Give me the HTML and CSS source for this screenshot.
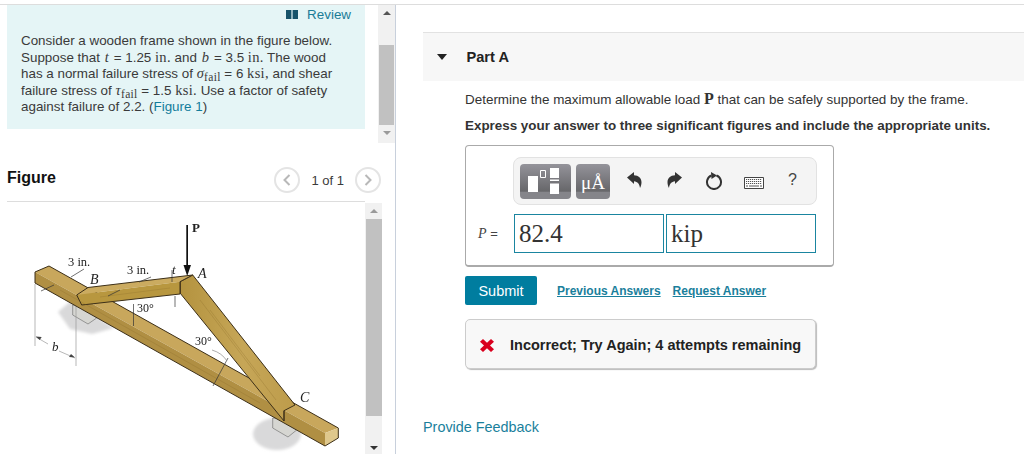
FILE: index.html
```html
<!DOCTYPE html>
<html lang="en">
<head>
<meta charset="utf-8">
<title>Part A</title>
<link rel="stylesheet" href="styles.css">
</head>
<body>
<div class="app">
  <section class="left">
    <div class="intro-row">
      <div class="intro">
        <div class="review-row">
          <svg class="book" viewBox="0 0 12 9"><path d="M0 0h5.400v9H0zM6.600 0H12v9H6.600z"/></svg>
          <a class="review">Review</a>
        </div>
        <p class="problem">Consider a wooden frame shown in the figure below.<br>Suppose that <i class="m var">t</i> = 1.25 <span class="m">in.</span> and <i class="m var">b</i> = 3.5 <span class="m">in.</span> The wood<br>has a normal failure stress of <i class="m">σ</i><sub class="m">fail</sub> = 6 <span class="m">ksi,</span> and shear<br>failure stress of <i class="m">τ</i><sub class="m">fail</sub> = 1.5 <span class="m">ksi.</span> Use a factor of safety<br>against failure of 2.2. (<a class="link">Figure 1</a>)</p>
      </div>
      <div class="scroll scroll-top">
        <span class="up"></span>
        <span class="thumb"></span>
        <span class="down"></span>
      </div>
    </div>
    <div class="fig-head">
      <h2 class="fig-title">Figure</h2>
      <div class="pager">
        <span class="circle"><svg viewBox="0 0 8 12"><path d="M6.500 1 1.500 6l5 5"/></svg></span>
        <span class="count">1 of 1</span>
        <span class="circle"><svg viewBox="0 0 8 12"><path d="M1.500 1l5 5-5 5"/></svg></span>
      </div>
    </div>
    <div class="fig-rule"></div>
    <div class="fig-row">
      <svg class="frame" viewBox="7 203 358 251">
        <defs>
          <filter id="soft"><feGaussianBlur stdDeviation="1.500"/></filter>
          <linearGradient id="strut" x1="0" y1="0" x2="1" y2="0">
            <stop offset="0" stop-color="#b4933f"/><stop offset=".55" stop-color="#c6a657"/><stop offset="1" stop-color="#bd9c4b"/>
          </linearGradient>
        </defs>
        <g filter="url(#soft)" fill="#d9d9da">
          <path d="M58 312 72 300 114 328 92 334 70 329z"/>
          <ellipse cx="277" cy="434" rx="24" ry="16"/>
        </g>
        <path d="M72.700 305v10l15.300 9 8.700-6-10-13z" fill="#d6d6d2" stroke="#666" stroke-width=".6"/>
        <path d="M272.700 418v10l15.300 9 8.700-7-10-12z" fill="#d6d6d2" stroke="#666" stroke-width=".6"/>
        <g stroke="#999" stroke-width=".7" fill="none">
          <path d="M35 284v62M76 306v60"/>
          <path d="M36 337l12 7M59 351l16 7"/>
        </g>
        <path d="M35.700 336.500l6 .5-2 3zM75 357.500l-6-.5 2-3z" fill="#444"/>
        <path d="M49 266 35 272 325 433 338.300 428z" fill="#c8a75c"/>
        <path d="M35 272v11L325 446v-13z" fill="#b08f43"/>
        <path d="M325 433l13.300-5v10L325 446z" fill="#dfc88c"/>
        <path d="M49 266 338.300 428v10L325 446 35 283v-11z" fill="none" stroke="#3c2f18" stroke-width="1"/>
        <path d="M192.700 275 180 281.700V293L284 421v-10.300L295 405z" fill="url(#strut)"/>
        <path d="M192.700 275 295 405l-11 5.700v10.300L180 293v-11.300zM180 281.700v11.300M284 410.700v10.300" fill="none" stroke="#3c2f18" stroke-width="1"/>
        <path d="M76.700 295 88 287.500 192.700 275 180 281.700z" fill="#cbab60"/>
        <path d="M76.700 295l5 10L180 294v-12.300z" fill="#b8973f"/>
        <path d="M76.700 295 88 287.500 192.700 275 180 281.700V294L81.700 305z" fill="none" stroke="#3c2f18" stroke-width="1"/>
        <g stroke="#8d6f2c" stroke-width=".5" opacity=".6" fill="none">
          <path d="M60 290l200 113M200 300l76 100M100 297l70-9M210 310l50 66"/>
        </g>
        <g stroke="#333" stroke-width=".7" fill="none">
          <path d="M71 277l13-8M139 282l12-5M108 296l12-6M41 291l13-6"/>
          <path d="M172 270v12M175 296v11M133.500 304v22M228 358l-15 28"/>
          <path d="M212 350q10 3 15 11" stroke="#888"/>
        </g>
        <path d="M186.300 225h1.700v42h-1.700z" fill="#111"/>
        <path d="M183.500 265h7.500l-3.800 11z" fill="#111"/>
        <text class="lbl" x="68" y="266">3 in.</text>
        <text class="lbl" x="127" y="274">3 in.</text>
        <text class="lbl deg" x="137" y="312">30°</text>
        <text class="lbl deg" x="195" y="345">30°</text>
        <text class="lbl it" x="90" y="284">B</text>
        <text class="lbl it" x="198" y="278">A</text>
        <text class="lbl it" x="300" y="402">C</text>
        <text class="lbl it small" x="172" y="274">t</text>
        <text class="lbl it small" x="52" y="351">b</text>
        <text class="lbl bold" x="192" y="232">P</text>
      </svg>
      <div class="scroll scroll-fig">
        <span class="up"></span>
        <span class="thumb"></span>
        <span class="down"></span>
      </div>
    </div>
  </section>

  <main class="right">
    <div class="part-head">
      <span class="caret"></span>
      <h1 class="part-title">Part A</h1>
    </div>
    <div class="part-body">
      <p class="q">Determine the maximum allowable load <b class="m big">P</b> that can be safely supported by the frame.</p>
      <p class="q-strong">Express your answer to three significant figures and include the appropriate units.</p>
      <div class="answer">
        <div class="toolbar">
          <span class="tbtn tbtn-wide">
            <svg viewBox="0 0 51 35" class="tpl">
              <path fill="#fff" d="M8 12h10v16H8zM30 4h9v10h-9zM30 15.500h9V17h-9zM30 19.500h9V30h-9z"/>
              <path fill="none" stroke="#fff" d="M20.500 6.500h5v7h-5z"/>
            </svg>
          </span>
          <span class="tbtn tbtn-unit">μÅ</span>
          <svg class="ico ico-undo" viewBox="0 0 15 16"><path d="M0 5.500 7 0v3.300c4.500 0 7.500 3 7.500 7 0 2.200-.6 4-1.500 5.700-.3-3.500-2.500-6.500-6-6.700v2.700z"/></svg>
          <svg class="ico ico-redo" viewBox="0 0 15 16"><path d="M15 5.500 8 0v3.300c-4.500 0-7.500 3-7.500 7 0 2.200.6 4 1.500 5.700.3-3.500 2.500-6.500 6-6.700v2.700z"/></svg>
          <svg class="ico ico-reset" viewBox="0 0 18 18"><path d="M11.500 3.500a7 7 0 1 1-5 0" fill="none" stroke="#333" stroke-width="2"/><path d="M6 0l6 3.500L6.500 7z" fill="#333"/></svg>
          <svg class="ico ico-keys" viewBox="0 0 20 12"><path d="M.5.500h19v11H.5z" fill="#fff" stroke="#444"/><path d="M2 2.500h16M2 4.500h16M2 6.500h16" stroke="#555" stroke-dasharray="1.200 .8"/><path d="M5 9h10M2 9h2M16 9h2" stroke="#555"/></svg>
          <span class="help">?</span>
        </div>
        <div class="eq-row">
          <span class="eq-label"><i class="m">P</i> =</span>
          <div class="field">82.4</div>
          <div class="field">kip</div>
        </div>
      </div>
      <div class="actions">
        <button class="submit">Submit</button>
        <a class="act-link first">Previous Answers</a>
        <a class="act-link">Request Answer</a>
      </div>
      <div class="feedback">
        <svg class="x" viewBox="0 0 14 13"><path d="M3 0l4 3.700L11 0l3 2.800L10 6.500l4 3.700-3 2.800-4-3.700L3 13 0 10.200l4-3.700L0 2.800z"/></svg>
        <span>Incorrect; Try Again; 4 attempts remaining</span>
      </div>
    </div>
    <a class="provide">Provide Feedback</a>
  </main>
</div>
</body>
</html>
```
FILE: styles.css
```css
* { box-sizing: border-box; }
html, body { margin: 0; padding: 0; background: #fff; }
body { font-family: "Liberation Sans", Arial, sans-serif; color: #333; overflow: hidden; }
p, h1, h2 { margin: 0; }
.m { font-family: "Liberation Serif", "Times New Roman", serif; }
.app {
  display: flex;
  height: 450px;
  margin-top: 4px;
  border-top: 1px solid #ddd;
  overflow: hidden;
}
.left { width: 396px; flex: none; border-right: 1px solid #c8d0dc; }
.intro-row { display: flex; height: 138px; padding-left: 7px; }
.intro { width: 358px; height: 124px; background: #e5f5f6; padding: 0 14px; }
.review-row { display: flex; justify-content: flex-end; align-items: center; height: 19px; margin-bottom: 9px; gap: 9px; }
.book { width: 12px; height: 9px; fill: #17536a; }
.review { font-size: 13.400px; color: #1b7c96; }
.problem { font-size: 13.400px; line-height: 16.600px; color: #3a3a3a; white-space: nowrap; }
.problem sub { font-size: 11.500px; line-height: 0; vertical-align: -3px; }
.problem .m { font-size: 14.500px; letter-spacing: .3px; line-height: 0; }
.problem sub.m { font-size: 11.500px; }
.problem .var { margin: 0 1px; }
.link { color: #137d9c; }
.scroll { width: 17px; flex: none; background: #f1f1f1; display: flex; flex-direction: column; align-items: center; }
.scroll-top { margin-left: 13px; height: 138px; }
.scroll-top .thumb { margin-top: 30px; height: 80px; width: 15px; background: #c1c1c1; }
.up, .down { width: 0; height: 0; border-left: 4px solid transparent; border-right: 4px solid transparent; flex: none; }
.up { border-bottom: 4px solid #555; margin-top: 6px; }
.down { border-top: 4px solid #9a9a9a; margin-top: 6px; }
.fig-head { display: flex; justify-content: space-between; align-items: flex-start; height: 58px; width: 374px; margin-left: 7px; }
.fig-title { font-size: 16px; font-weight: bold; color: #111; line-height: 26px; margin-top: 21.500px; }
.pager { display: flex; align-items: center; margin-top: 24px; font-size: 13px; }
.circle { width: 26px; height: 26px; border: 2px solid #e4e4e4; border-radius: 50%; display: flex; align-items: center; justify-content: center; }
.circle svg { width: 8px; height: 12px; fill: none; stroke: #b8b8b8; stroke-width: 2; }
.count { margin: 0 11px; color: #3a3a3a; }
.fig-rule { width: 358px; height: 1px; margin-left: 7px; background: #ddd; }
.fig-row { display: flex; height: 252px; padding: 1px 0 0 7px; }
.frame { width: 358px; height: 251px; flex: none; filter: blur(.4px); }
.lbl { font-family: "Liberation Serif", serif; font-size: 12.500px; fill: #222; }
.deg { font-size: 12px; }
.it { font-style: italic; font-size: 14px; }
.small { font-size: 13px; }
.bold { font-weight: bold; font-size: 13px; }
.scroll-fig { height: 251px; }
.scroll-fig .up { border-bottom-color: #9a9a9a; margin-top: 6px; }
.scroll-fig .thumb { margin-top: 6px; width: 16px; height: 197px; background: #c1c1c1; }
.scroll-fig .down { border-top-color: #333; margin-top: 30px; }
.right { flex: 1; padding: 27px 0 0 27px; min-width: 0; }
.part-head { height: 49px; background: #f7f7f7; border-top: 1px solid #e2e2e2; display: flex; align-items: center; padding-left: 14px; }
.caret { width: 0; height: 0; border-left: 5.500px solid transparent; border-right: 5.500px solid transparent; border-top: 6px solid #222; }
.part-title { font-size: 14.600px; font-weight: bold; color: #222; margin-left: 19.500px; }
.part-body { padding-left: 42px; }
.q { font-size: 13.450px; line-height: 18px; margin-top: 9px; color: #333; }
.big { font-size: 16px; }
.q-strong { font-size: 13.400px; font-weight: bold; line-height: 18px; margin-top: 8px; color: #333; }
.answer { width: 369px; height: 122px; margin-top: 10px; border: 1px solid #aaa; border-bottom-width: 2px; border-radius: 4px; padding: 11px 0 0 47px; }
.toolbar { width: 304px; height: 48px; background: #f4f4f4; border: 1px solid #e2e2e2; border-radius: 8px; display: flex; align-items: center; padding-left: 6px; }
.tbtn { height: 35px; border-radius: 4px; background: linear-gradient(#94939a 0, #67676a 78%, #85858a 80%, #85858a 100%); display: block; color: #fff; }
.tbtn-wide { width: 51px; }
.tpl { width: 51px; height: 35px; display: block; }
.tbtn-unit { width: 34px; margin-left: 5px; font-family: "Liberation Serif", serif; font-size: 19px; line-height: 37px; text-align: center; white-space: nowrap; }
.ico { flex: none; fill: #333; }
.ico-undo { width: 15px; height: 16px; margin-left: 17px; margin-top: -2px; }
.ico-redo { width: 15px; height: 16px; margin-left: 25px; margin-top: -2px; }
.ico-reset { width: 18px; height: 18px; margin-left: 23px; }
.ico-keys { width: 20px; height: 12px; margin-left: 21px; margin-top: 3px; }
.help { font-size: 16px; color: #444; margin-left: 24px; margin-top: -2px; }
.eq-row { display: flex; align-items: center; margin-top: 9px; margin-left: -35px; }
.eq-label { width: 36px; font-size: 13px; white-space: nowrap; color: #444; }
.eq-label .m { font-size: 14px; }
.field { width: 150px; height: 39px; margin-right: 2px; border: 1px solid #1a85a0; font-family: "Liberation Serif", serif; font-size: 25px; line-height: 37px; padding-left: 4px; color: #333; }
.actions { display: flex; align-items: center; margin-top: 9px; }
.submit { width: 72px; height: 29px; background: #007d9f; border: 0; border-radius: 2px; color: #fff; font: 14.500px "Liberation Sans", Arial, sans-serif; padding: 0; }
.act-link { font-size: 12px; font-weight: bold; color: #1a7f9c; text-decoration: underline; margin-left: 12px; }
.act-link.first { margin-left: 20px; }
.feedback { width: 351px; height: 50px; margin-top: 14px; background: #f8f8f8; border: 1px solid #ccc; border-radius: 5px; box-shadow: 1px 1px 1px #bbb; display: flex; align-items: center; padding: 2px 0 0 14px; font-size: 14.500px; font-weight: bold; color: #222; }
.x { width: 14px; height: 13px; fill: #d9001e; margin-right: 16px; flex: none; }
.provide { display: block; margin-top: 50px; font-size: 14.400px; color: #1a7f9c; }
```
